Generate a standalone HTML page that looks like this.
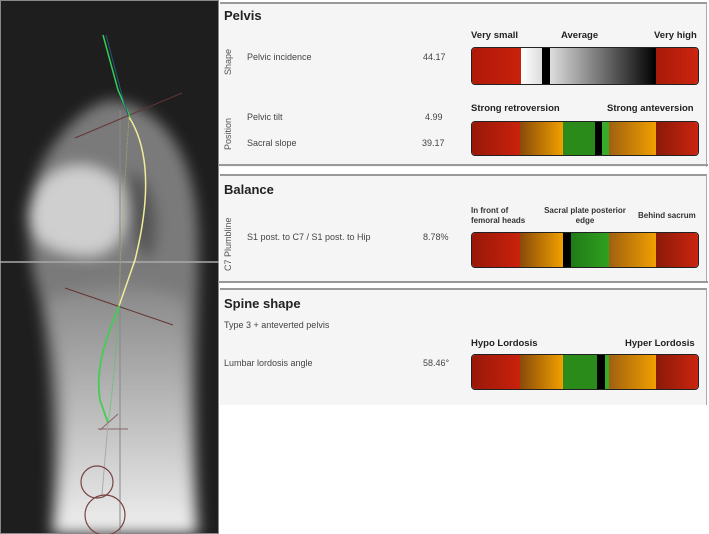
<!DOCTYPE html>
<html><head><style>
body{margin:0;width:709px;height:534px;background:#fff;position:relative;overflow:hidden;font-family:"Liberation Sans",sans-serif;color:#333}
.a{position:absolute;white-space:nowrap}
.panel{position:absolute;left:220px;width:486px;background:#f5f5f5;border-right:1px solid #aaa}
.t{font-weight:bold;font-size:13px;color:#222}
.l{font-size:9px;color:#444}
.b{font-weight:bold;font-size:9.5px;color:#222}
.s{font-weight:bold;font-size:8px;color:#333;text-align:center;line-height:10px}
.v{font-size:9px;color:#555;transform:rotate(-90deg);transform-origin:left top}
.bar{position:absolute;left:471px;width:228px;border:1.5px solid #222;border-radius:4px;overflow:hidden;box-sizing:border-box}
.seg{position:absolute;top:0;bottom:0}
.hl{position:absolute;left:218px;width:490px;height:2px;background:#999}
</style></head><body>
<svg class="a" style="left:0;top:0" width="219" height="534">
<defs>
<linearGradient id="g2" x1="0" y1="0" x2="0" y2="1"><stop offset="0" stop-color="#888"/><stop offset="0.5" stop-color="#bbb"/><stop offset="1" stop-color="#f0f0f0"/></linearGradient>
<filter id="bl"><feGaussianBlur stdDeviation="7"/></filter>
</defs>
<rect width="219" height="534" fill="#1e1e1e"/>
<g filter="url(#bl)">
<path d="M110 100 C160 105 195 150 198 230 C200 300 192 360 200 534 L50 534 C55 430 50 360 40 300 C25 250 22 190 50 150 C70 120 90 105 110 100Z" fill="#7a7a7a"/>
<path d="M45 300 C70 380 65 460 55 534 L195 534 C188 450 188 380 185 300 C150 280 90 285 45 300Z" fill="url(#g2)"/>
<path d="M28 215 C35 165 90 150 120 185 C135 220 120 260 80 255 C50 252 30 240 28 215Z" fill="#cfcfcf"/>
<path d="M130 170 C155 175 165 230 150 260 C135 255 125 220 130 170Z" fill="#555"/>
</g>
<rect x="0" y="0" width="219" height="534" fill="none" stroke="#888" stroke-width="2"/>
<line x1="0" y1="262" x2="219" y2="262" stroke="#aaa" stroke-width="1.5"/>
<line x1="120" y1="110" x2="120" y2="534" stroke="#888" stroke-width="1"/>
<line x1="75" y1="138" x2="182" y2="93" stroke="#633" stroke-width="1"/>
<line x1="65" y1="288" x2="173" y2="325" stroke="#633" stroke-width="1"/>
<path d="M103 35 L118 90 L130 117" stroke="#3c5" stroke-width="1.5" fill="none"/>
<path d="M106 35 L122 95 L128 115" stroke="#257" stroke-width="1" fill="none"/>
<path d="M129 117 C150 150 150 200 135 260 L119 306" stroke="#ee9" stroke-width="1.5" fill="none"/>
<path d="M129 117 C125 180 120 250 119 306" stroke="#aa6" stroke-width="1" fill="none" stroke-dasharray="1 1"/>
<path d="M119 306 C105 340 95 370 100 400 L108 423" stroke="#4c5" stroke-width="1.8" fill="none"/>
<path d="M119 306 C116 350 112 400 108 423" stroke="#4c5" stroke-width="1" fill="none" stroke-dasharray="1 1"/>
<line x1="98" y1="429" x2="128" y2="429" stroke="#866" stroke-width="1"/>
<line x1="100" y1="430" x2="118" y2="414" stroke="#866" stroke-width="1"/>
<line x1="108" y1="423" x2="102" y2="495" stroke="#aaa" stroke-width="1"/>
<circle cx="97" cy="482" r="16" fill="none" stroke="#744" stroke-width="1.2"/>
<circle cx="105" cy="515" r="20" fill="none" stroke="#744" stroke-width="1.2"/>
</svg>

<div class="panel" style="top:2px;height:163px;border-top:2px solid #999"></div>
<div class="hl" style="top:164px"></div>
<div class="panel" style="top:174px;height:107px;border-top:2px solid #999"></div>
<div class="hl" style="top:281px"></div>
<div class="panel" style="top:288px;height:115px;border-top:2px solid #999"></div>

<div class="a t" style="left:224px;top:8px">Pelvis</div>
<div class="a v" style="left:223px;top:75px">Shape</div>
<div class="a l" style="left:247px;top:52px">Pelvic incidence</div>
<div class="a l" style="left:423px;top:52px">44.17</div>
<div class="a b" style="left:471px;top:30px">Very small</div>
<div class="a b" style="left:561px;top:30px">Average</div>
<div class="a b" style="left:654px;top:30px">Very high</div>
<div class="bar" style="top:47px;height:38px">
<div class="seg" style="left:0;width:49px;background:linear-gradient(90deg,#b01808,#c8220c)"></div>
<div class="seg" style="left:49px;width:21px;background:linear-gradient(90deg,#fff,#ddd)"></div>
<div class="seg" style="left:70px;width:8px;background:#000"></div>
<div class="seg" style="left:78px;width:106px;background:linear-gradient(90deg,#ddd,#000)"></div>
<div class="seg" style="left:184px;width:44px;background:linear-gradient(90deg,#a81a08,#cc2510)"></div>
</div>

<div class="a v" style="left:223px;top:150px">Position</div>
<div class="a l" style="left:247px;top:112px">Pelvic tilt</div>
<div class="a l" style="left:425px;top:112px">4.99</div>
<div class="a l" style="left:247px;top:138px">Sacral slope</div>
<div class="a l" style="left:422px;top:138px">39.17</div>
<div class="a b" style="left:471px;top:103px">Strong retroversion</div>
<div class="a b" style="left:607px;top:103px">Strong anteversion</div>
<div class="bar" style="top:121px;height:35px">
<div class="seg" style="left:0;width:48px;background:linear-gradient(90deg,#991808,#c8220c)"></div>
<div class="seg" style="left:48px;width:43px;background:linear-gradient(90deg,#8a4a08,#f0a000)"></div>
<div class="seg" style="left:91px;width:32px;background:#2a8a1a"></div>
<div class="seg" style="left:123px;width:7px;background:#000"></div>
<div class="seg" style="left:130px;width:7px;background:#3aaa2a"></div>
<div class="seg" style="left:137px;width:47px;background:linear-gradient(90deg,#a06010,#f0a000)"></div>
<div class="seg" style="left:184px;width:44px;background:linear-gradient(90deg,#8a1a08,#cc2510)"></div>
</div>

<div class="a t" style="left:224px;top:182px">Balance</div>
<div class="a v" style="left:223px;top:271px">C7 Plumbline</div>
<div class="a l" style="left:247px;top:232px">S1 post. to C7 / S1 post. to Hip</div>
<div class="a l" style="left:423px;top:232px">8.78%</div>
<div class="a s" style="left:471px;top:206px;text-align:left">In front of<br>femoral heads</div>
<div class="a s" style="left:540px;top:206px;width:90px">Sacral plate posterior<br>edge</div>
<div class="a s" style="left:638px;top:211px">Behind sacrum</div>
<div class="bar" style="top:232px;height:36px">
<div class="seg" style="left:0;width:48px;background:linear-gradient(90deg,#991808,#c8220c)"></div>
<div class="seg" style="left:48px;width:43px;background:linear-gradient(90deg,#8a4a08,#f0a000)"></div>
<div class="seg" style="left:91px;width:8px;background:#000"></div>
<div class="seg" style="left:99px;width:38px;background:linear-gradient(90deg,#207a18,#30a020)"></div>
<div class="seg" style="left:137px;width:47px;background:linear-gradient(90deg,#a06010,#f0a000)"></div>
<div class="seg" style="left:184px;width:44px;background:linear-gradient(90deg,#8a1a08,#cc2510)"></div>
</div>

<div class="a t" style="left:224px;top:296px">Spine shape</div>
<div class="a l" style="left:224px;top:320px">Type 3 + anteverted pelvis</div>
<div class="a l" style="left:224px;top:358px">Lumbar lordosis angle</div>
<div class="a l" style="left:423px;top:358px">58.46°</div>
<div class="a b" style="left:471px;top:338px">Hypo Lordosis</div>
<div class="a b" style="left:625px;top:338px">Hyper Lordosis</div>
<div class="bar" style="top:354px;height:36px">
<div class="seg" style="left:0;width:48px;background:linear-gradient(90deg,#991808,#c8220c)"></div>
<div class="seg" style="left:48px;width:43px;background:linear-gradient(90deg,#8a4a08,#f0a000)"></div>
<div class="seg" style="left:91px;width:34px;background:#2a8a1a"></div>
<div class="seg" style="left:125px;width:8px;background:#000"></div>
<div class="seg" style="left:133px;width:4px;background:#3aaa2a"></div>
<div class="seg" style="left:137px;width:47px;background:linear-gradient(90deg,#a06010,#f0a000)"></div>
<div class="seg" style="left:184px;width:44px;background:linear-gradient(90deg,#8a1a08,#cc2510)"></div>
</div>
</body></html>
